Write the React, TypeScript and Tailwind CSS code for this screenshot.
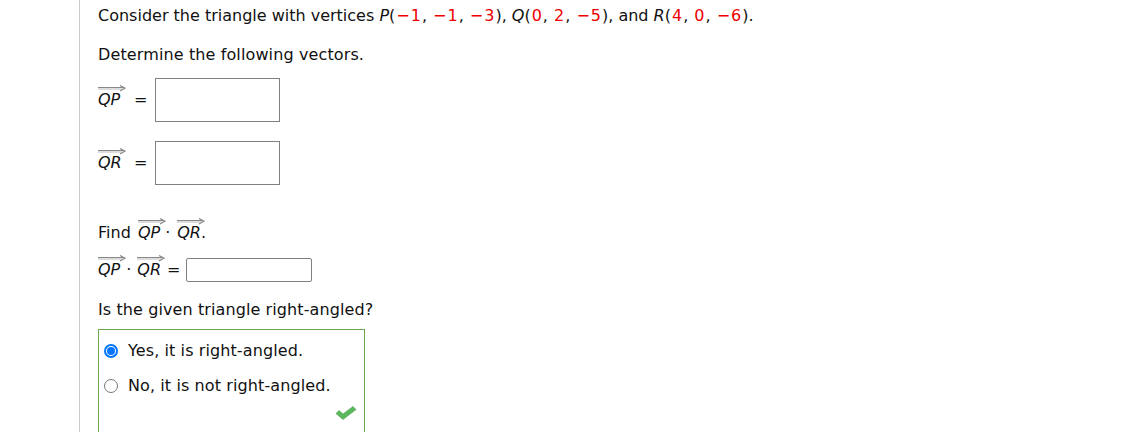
import React from "react";

const Num = ({ v }: { v: string }) => (
  <span className="text-[#ee0000] px-[1px]">
    {v.startsWith("−") ? (
      <>
        <span className="mr-[1px]">−</span>
        {v.slice(1)}
      </>
    ) : (
      v
    )}
  </span>
);

const I = ({ children }: { children: React.ReactNode }) => <i className="italic">{children}</i>;

const Vec = ({ a, b, cls = "" }: { a: string; b: string; cls?: string }) => (
  <span className={"relative inline-block " + cls}>
    <svg className="absolute left-0 -top-[6px]" width="28" height="8" viewBox="0 0 28 8">
      <line x1="0" y1="3.5" x2="25" y2="3.5" stroke="#888" strokeWidth="1" />
      <line x1="0" y1="5" x2="25" y2="5" stroke="#aaa" strokeWidth="0.8" />
      <path d="M22 1.5 L27 4.2 L22 7" fill="none" stroke="#888" strokeWidth="1.2" />
    </svg>
    <i className="italic">{a}{b}</i>
  </span>
);

export default function App() {
  return (
    <div className="w-[1136px] h-[432px] bg-white overflow-hidden flex" style={{ fontFamily: '"DejaVu Sans", Verdana, sans-serif' }}>
      <div className="w-[80px] shrink-0 border-r border-[#cccccc]" />
      <div className="pl-[18px] pt-[6px] text-[16px] text-[#111] leading-[20px]">
        <div>
          Consider the triangle with vertices <I>P</I>(<Num v="−1" />, <Num v="−1" />, <Num v="−3" />), <I>Q</I>(<Num v="0" />, <Num v="2" />, <Num v="−5" />), and <I>R</I>(<Num v="4" />, <Num v="0" />, <Num v="−6" />).
        </div>
        <div className="mt-[19px] tracking-[0.12px]">Determine the following vectors.</div>
        <div className="mt-[13px] flex items-center h-[43px]">
          <span className="w-[36px] text-[#111]"><Vec a="Q" b="P" /></span>
          <span className="w-[21px]">=</span>
          <div className="w-[125px] h-[44px] border border-[#808080]" />
        </div>
        <div className="mt-[20px] flex items-center h-[43px]">
          <span className="w-[36px]"><Vec a="Q" b="R" /></span>
          <span className="w-[21px]">=</span>
          <div className="w-[125px] h-[44px] border border-[#808080]" />
        </div>
        <div className="mt-[39px]">
          Find <Vec a="Q" b="P" cls="ml-[2px]" /><span className="mx-[5px]">·</span><Vec a="Q" b="R" cls="ml-[2px]" />.
        </div>
        <div className="mt-[15px] flex items-center h-[24px]">
          <Vec a="Q" b="P" /><span className="mx-[6px]">·</span><Vec a="Q" b="R" /><span className="mx-[6px]">=</span>
          <div className="w-[126px] h-[24px] border border-[#808080] rounded-[2px]" />
        </div>
        <div className="mt-[18px] tracking-[0.1px]">Is the given triangle right-angled?</div>
        <div className="mt-[9px] w-[267px] h-[120px] border border-[#6aa84f] relative">
          <div className="flex items-center mt-[11px] ml-[5px]">
            <span className="w-[14px] h-[14px] rounded-full border-2 border-[#0075ff] flex items-center justify-center">
              <span className="w-[8px] h-[8px] rounded-full bg-[#0075ff]" />
            </span>
            <span className="ml-[10px] tracking-[0.1px]">Yes, it is right-angled.</span>
          </div>
          <div className="flex items-center mt-[15px] ml-[5px]">
            <span className="w-[14px] h-[14px] rounded-full border border-[#767676]" />
            <span className="ml-[10px] tracking-[0.1px]">No, it is not right-angled.</span>
          </div>
          <svg className="absolute left-[236px] top-[76px]" width="22" height="14" viewBox="0 0 22 14">
            <path d="M1 7.5 L4 4.5 L8 8 L18 0.5 L21 3.5 L8 13.5 Z" fill="#5cb85c" stroke="#4a9a4a" strokeWidth="0.6" />
          </svg>
        </div>
      </div>
    </div>
  );
}
